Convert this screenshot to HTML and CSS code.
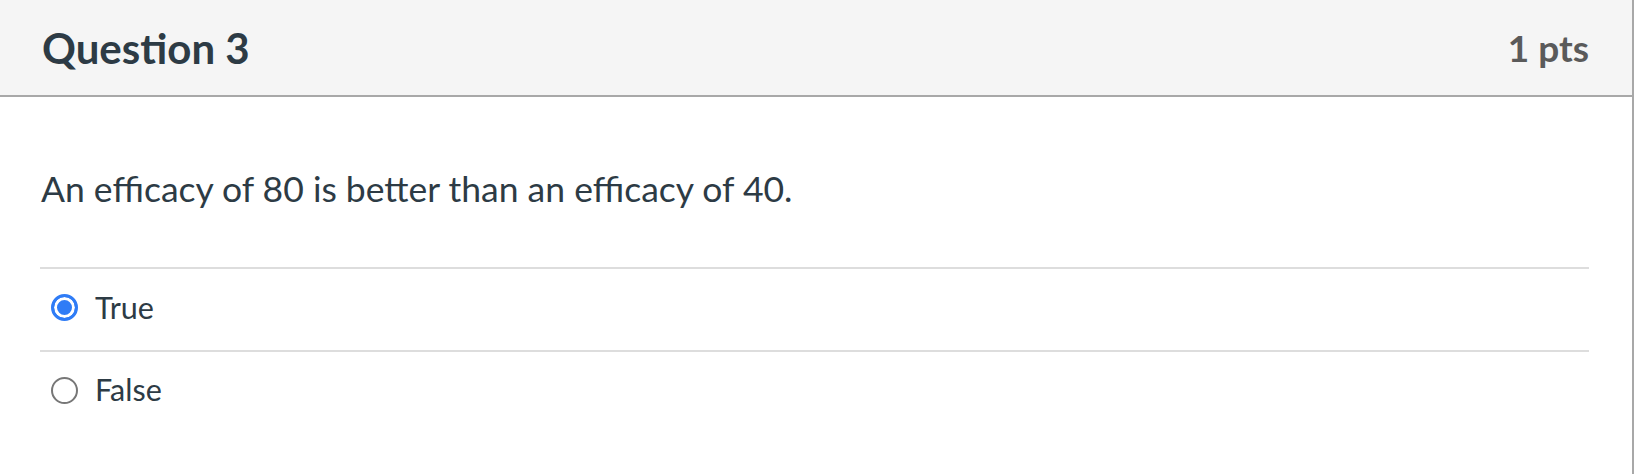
FILE: index.html
```html
<!DOCTYPE html>
<html lang="en">
<head>
<meta charset="utf-8">
<title>Question 3</title>
<link rel="stylesheet" href="styles.css">
</head>
<body>
<div class="question">
  <div class="question-header">
    <h2 class="question-title">Question 3</h2>
    <span class="question-points">1 pts</span>
  </div>
  <div class="question-body">
    <p class="question-text">An efficacy of 80 is better than an efficacy of 40.</p>
    <div class="answers">
      <label class="answer">
        <span class="radio radio-checked"></span>
        <span class="answer-label">True</span>
      </label>
      <label class="answer">
        <span class="radio"></span>
        <span class="answer-label">False</span>
      </label>
    </div>
  </div>
</div>
</body>
</html>
```
FILE: styles.css
```css
html, body {
  margin: 0;
  padding: 0;
  background: #ffffff;
}
body {
  font-family: Lato, "Liberation Sans", sans-serif;
  color: #2d3b45;
}
.question {
  width: 1632px;
  height: 474px;
  border-right: 2px solid #a8a8a8;
  box-sizing: content-box;
}
.question-header {
  height: 95px;
  background: #f5f5f5;
  border-bottom: 2px solid #a8a8a8;
  display: flex;
  align-items: center;
  justify-content: space-between;
  padding: 0 43px 0 42px;
}
.question-title {
  margin: 0;
  font-size: 42px;
  font-weight: 700;
  color: #2d3b45;
  line-height: 1;
}
.question-points {
  font-size: 37px;
  font-weight: 700;
  color: #5a5a5a;
  line-height: 1;
}
.question-body {
  padding: 0 43px 0 40px;
}
.question-text {
  margin: 0;
  padding: 72px 0 0 1px;
  height: 98px;
  font-size: 35.5px;
  line-height: 40px;
  color: #2d3b45;
}
.answers {
  border-top: 2px solid #dddddd;
}
.answer {
  display: flex;
  align-items: center;
  height: 83px;
  box-sizing: border-box;
  padding: 0 0 6px 11px;
  gap: 17px;
  border-bottom: 2px solid #dddddd;
}
.answer:last-child {
  border-bottom: none;
  padding-bottom: 9px;
}
.radio {
  width: 27px;
  height: 27px;
  margin-top: 2px;
  box-sizing: border-box;
  border-radius: 50%;
  border: 2px solid #777777;
  background: #ffffff;
  flex: none;
}
.radio-checked {
  border: 3px solid #2f7cf6;
  box-shadow: inset 0 0 0 3px #ffffff;
  background: #2f7cf6;
}
.answer-label {
  font-size: 30.5px;
  color: #2d3b45;
}
```
